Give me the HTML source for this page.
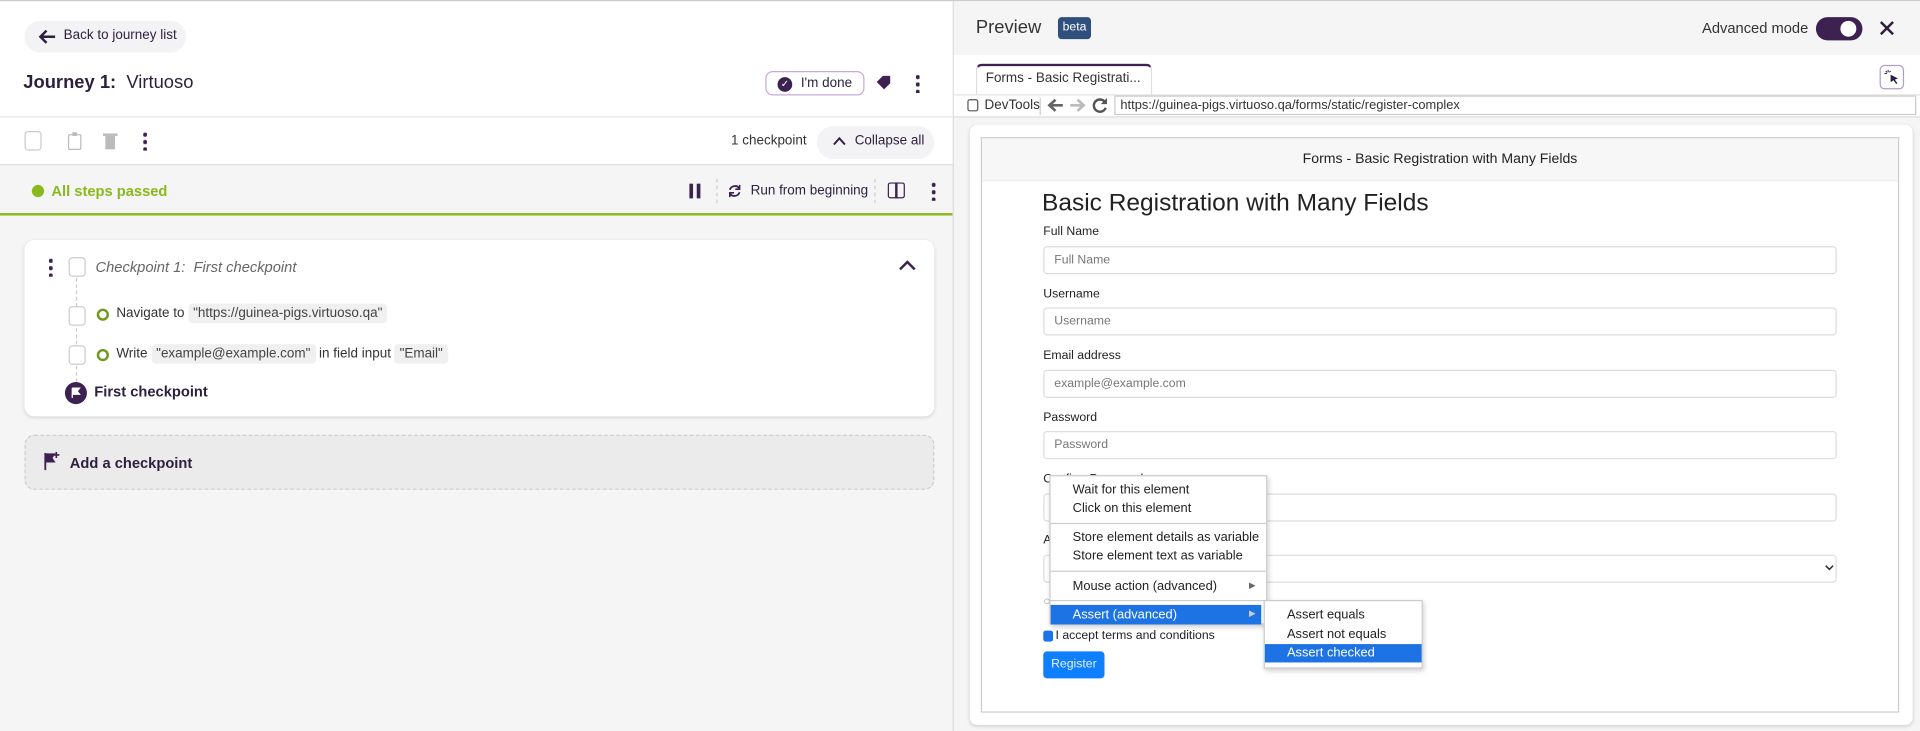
<!DOCTYPE html>
<html><head><meta charset="utf-8"><style>
*{box-sizing:border-box;margin:0;padding:0}
body{width:1920px;height:731px;overflow:hidden;font-family:"Liberation Sans",sans-serif;background:#fff;position:relative;color:#2d1f3d}
#w{position:absolute;left:0;top:0;width:1568px;height:597px;transform:scale(1.22449);transform-origin:0 0}
.a{position:absolute}
.t{font-size:12px;white-space:nowrap}
.cb{position:absolute;width:14px;height:16px;border:1px solid #ccc;border-radius:3px;background:#fff}
.chip{background:#f0f0f0;border-radius:3px;padding:2px 4px;color:#444}
.lbl{position:absolute;left:852px;font-size:10px;color:#222}
.inp{position:absolute;left:852px;width:648px;height:23px;border:1px solid #ddd;border-radius:3px;background:#fff;font-size:10px;color:#777;padding:5px 8px}
.mi{position:absolute;font-size:10.5px;color:#222;white-space:nowrap}
.sep{position:absolute;height:1px;background:#ccc}
.dots{position:absolute;width:3px;height:16px;background:radial-gradient(circle,#3d2150 1.5px,transparent 2px) 0 0/3px 6px}
</style></head><body><div id="w">
<div class="a" style="left:0;top:0;width:1568px;height:1px;background:#ccc"></div>
<!-- left panel -->
<div class="a" style="left:0;top:135px;width:778px;height:462px;background:#f5f5f5"></div>
<div class="a" style="left:20px;top:17px;width:132px;height:26px;background:#f3f3f5;border-radius:13px"></div>
<svg class="a" style="left:30px;top:23px" width="16" height="14" viewBox="0 0 16 14"><path d="M15 7H3M8 2L3 7l5 5" stroke="#2d1f3d" stroke-width="2" fill="none"/></svg>
<div class="a t" style="left:52px;top:23px;font-size:11px;color:#2d1f3d">Back to journey list</div>
<div class="a" style="left:19px;top:59px;font-size:15px;color:#2d1f3d"><b style="font-weight:600">Journey 1:</b>&nbsp; Virtuoso</div>
<div class="a" style="left:625px;top:58px;width:81px;height:20px;border:1px solid #c9a8e0;border-radius:6px"></div>
<div class="a" style="left:635px;top:63px;width:12px;height:12px;border-radius:50%;background:#3d2150;color:#fff;font-size:8px;text-align:center;line-height:12px">✓</div>
<div class="a t" style="left:654px;top:62px;font-size:11px">I'm done</div>
<svg class="a" style="left:715px;top:61px" width="13" height="13" viewBox="0 0 13 13"><path d="M1 6L6 1h6v6l-5 5z" fill="#3d2150"/></svg>
<div class="dots" style="left:748px;top:60px"></div>
<div class="a" style="left:0;top:95px;width:778px;height:1px;background:#e6e6e6"></div>
<div class="cb" style="left:20px;top:107px"></div>
<svg class="a" style="left:55px;top:107px" width="12" height="16" viewBox="0 0 12 16"><rect x="1" y="3" width="10" height="12" rx="1" fill="none" stroke="#bbb"/><rect x="4" y="1" width="4" height="3" fill="#bbb"/></svg>
<svg class="a" style="left:84px;top:108px" width="12" height="14" viewBox="0 0 12 14"><rect x="2" y="3" width="8" height="11" fill="#bbb"/><rect x="0" y="1" width="12" height="2" fill="#bbb"/></svg>
<div class="dots" style="left:117px;top:107px"></div>
<div class="a t" style="left:597px;top:109px;font-size:11px;color:#333">1 checkpoint</div>
<div class="a" style="left:667px;top:103px;width:96px;height:27px;background:#f3f3f5;border-radius:14px"></div>
<svg class="a" style="left:680px;top:111px" width="11" height="8" viewBox="0 0 11 8"><path d="M1 7l4.5-5 4.5 5" stroke="#2d1f3d" stroke-width="1.6" fill="none"/></svg>
<div class="a t" style="left:698px;top:109px;font-size:11px">Collapse all</div>
<div class="a" style="left:0;top:134px;width:778px;height:1px;background:#ddd"></div>
<div class="a" style="left:26px;top:151px;width:10px;height:10px;border-radius:50%;background:#8ab91e"></div>
<div class="a t" style="left:42px;top:149px;font-size:12px;color:#8ab91e;font-weight:600">All steps passed</div>
<div class="a" style="left:563px;top:150px;width:3px;height:12px;background:#3d2150"></div>
<div class="a" style="left:569px;top:150px;width:3px;height:12px;background:#3d2150"></div>
<div class="a" style="left:585px;top:146px;width:0;height:20px;border-left:1px dashed #ccc"></div>
<svg class="a" style="left:594px;top:150px" width="12" height="12" viewBox="0 0 12 12"><path d="M10 4A4.5 4.5 0 0 0 2 5M2 8a4.5 4.5 0 0 0 8-1" stroke="#3d2150" stroke-width="1.5" fill="none"/><path d="M10 1v3.5H6.5M2 11V7.5h3.5" stroke="#3d2150" stroke-width="1.3" fill="none"/></svg>
<div class="a t" style="left:613px;top:150px;font-size:11px">Run from beginning</div>
<div class="a" style="left:714px;top:146px;width:0;height:20px;border-left:1px dashed #ccc"></div>
<div class="a" style="left:725px;top:149px;width:14px;height:13px;border:1.5px solid #3d2150;border-radius:2px"></div>
<div class="a" style="left:731px;top:149px;width:1.5px;height:13px;background:#3d2150"></div>
<div class="dots" style="left:761px;top:148px"></div>
<div class="a" style="left:0;top:174px;width:778px;height:2px;background:#8ab91e"></div>
<!-- card -->
<div class="a" style="left:20px;top:196px;width:743px;height:144px;background:#fff;border-radius:8px;box-shadow:0 1px 3px rgba(0,0,0,.12)"></div>
<div class="dots" style="left:40px;top:210px"></div>
<div class="cb" style="left:56px;top:210px"></div>
<div class="a t" style="left:78px;top:211px;font-size:12px;color:#666;font-style:italic">Checkpoint 1:&nbsp; First checkpoint</div>
<svg class="a" style="left:734px;top:212px" width="14" height="10" viewBox="0 0 14 10"><path d="M1 8l6-6 6 6" stroke="#3d2150" stroke-width="2" fill="none"/></svg>
<div class="a" style="left:62px;top:227px;height:85px;border-left:1px dashed #ccc"></div>
<div class="cb" style="left:56px;top:250px"></div>
<div class="a" style="left:79px;top:252px;width:10px;height:10px;border:2.5px solid #6e9a1a;border-radius:50%"></div>
<div class="a t" style="left:95px;top:250px;font-size:11px;color:#333">Navigate to <span class="chip">"https://guinea-pigs.virtuoso.qa"</span></div>
<div class="cb" style="left:56px;top:282px"></div>
<div class="a" style="left:79px;top:285px;width:10px;height:10px;border:2.5px solid #6e9a1a;border-radius:50%"></div>
<div class="a t" style="left:95px;top:283px;font-size:11px;color:#333">Write <span class="chip">"example@example.com"</span> in field input <span class="chip">"Email"</span></div>
<div class="a" style="left:53px;top:312px;width:18px;height:18px;border-radius:50%;background:#3d2150"></div>
<svg class="a" style="left:57px;top:316px" width="10" height="10" viewBox="0 0 10 10"><path d="M2 1v8M2 1h6L6 3.5 8 6H2" fill="#fff" stroke="#fff"/></svg>
<div class="a t" style="left:77px;top:313px;font-size:12px;font-weight:600">First checkpoint</div>
<div class="a" style="left:20px;top:355px;width:743px;height:45px;background:#ebebeb;border:1.5px dashed #ccc;border-radius:8px"></div>
<svg class="a" style="left:35px;top:369px" width="14" height="15" viewBox="0 0 14 15"><path d="M2 1v14M2 2h7l-2 3 2 3H2" fill="#3d2150" stroke="#3d2150" stroke-width="1.5"/><path d="M11 0v5M8.5 2.5h5" stroke="#3d2150" stroke-width="1.3"/></svg>
<div class="a t" style="left:57px;top:371px;font-size:12px;font-weight:600">Add a checkpoint</div>
<!-- right panel -->
<div class="a" style="left:778px;top:1px;width:790px;height:596px;background:#f5f5f5;border-left:1px solid #ddd"></div>
<div class="a t" style="left:797px;top:14px;font-size:15px;color:#333">Preview</div>
<div class="a t" style="left:864px;top:14px;width:27px;height:18px;background:#2f4f7d;color:#fff;font-size:10px;border-radius:3px;text-align:center;line-height:18px">beta</div>
<div class="a t" style="left:1390px;top:16px;font-size:12px;color:#333">Advanced mode</div>
<div class="a" style="left:1483px;top:14px;width:38px;height:19px;border-radius:10px;background:#3d2150"></div>
<div class="a" style="left:1503px;top:17px;width:13px;height:13px;border-radius:50%;background:#fff"></div>
<svg class="a" style="left:1535px;top:17px" width="12" height="12" viewBox="0 0 12 12"><path d="M1 1l10 10M11 1L1 11" stroke="#2d1f3d" stroke-width="2"/></svg>
<div class="a" style="left:779px;top:45px;width:789px;height:51px;background:#fff"></div>
<div class="a" style="left:797px;top:52px;width:144px;height:26px;border:1px solid #ddd;border-top:2px solid #3d2150;border-bottom:none;border-radius:5px 5px 0 0;background:#fff"></div>
<div class="a t" style="left:805px;top:58px;font-size:11px;color:#333">Forms - Basic Registrati...</div>
<div class="a" style="left:1535px;top:53px;width:20px;height:20px;border:1px solid #b49bd0;border-radius:4px"></div>
<svg class="a" style="left:1539px;top:57px" width="12" height="12" viewBox="0 0 12 12"><path d="M5 4l6 3-2.5 1 2 3-1 .6-2-3L5 10z" fill="#2d1f3d"/><path d="M3 0v2M0 3h2M1 1l1.2 1.2M5 1L4 2" stroke="#2d1f3d" stroke-width=".8"/></svg>
<div class="a" style="left:779px;top:77px;width:789px;height:1px;background:#e3e3e3"></div>
<div class="a" style="left:790px;top:81px;width:9px;height:10px;border:1px solid #555;border-radius:2px"></div>
<div class="a t" style="left:804px;top:80px;font-size:11px;color:#333">DevTools</div>
<div class="a" style="left:849px;top:80px;width:1px;height:14px;background:#ccc"></div>
<svg class="a" style="left:855px;top:80px" width="14" height="12" viewBox="0 0 14 12"><path d="M13 6H3M7 1.5L2 6l5 4.5" stroke="#666" stroke-width="2.2" fill="none"/></svg>
<svg class="a" style="left:873px;top:80px" width="14" height="12" viewBox="0 0 14 12"><path d="M1 6h10M7 1.5L12 6l-5 4.5" stroke="#bbb" stroke-width="2.2" fill="none"/></svg>
<svg class="a" style="left:892px;top:79px" width="13" height="14" viewBox="0 0 13 14"><path d="M10.5 4.5A5 5 0 1 0 11 9" stroke="#555" stroke-width="2" fill="none"/><path d="M12 1v5H7z" fill="#555"/></svg>
<div class="a" style="left:910px;top:78px;width:655px;height:16px;border:1px solid #ccc;background:#fff"></div>
<div class="a t" style="left:915px;top:80px;font-size:10.5px;color:#333">https://guinea-pigs.virtuoso.qa/forms/static/register-complex</div>
<div class="a" style="left:779px;top:95px;width:789px;height:1px;background:#ddd"></div>
<div class="a" style="left:792px;top:102px;width:770px;height:490px;background:#fff;border-radius:6px;box-shadow:0 1px 3px rgba(0,0,0,.15)"></div>
<div class="a" style="left:801px;top:112px;width:750px;height:470px;border:1px solid #ccc;background:#fff"></div>
<div class="a" style="left:802px;top:113px;width:748px;height:35px;background:#f7f7f7;border-bottom:1px solid #eee"></div>
<div class="a t" style="left:802px;top:124px;width:748px;text-align:center;font-size:11.5px;color:#222">Forms - Basic Registration with Many Fields</div>
<div class="a t" style="left:851px;top:155px;font-size:20px;color:#222">Basic Registration with Many Fields</div>
<div class="lbl" style="top:184px">Full Name</div><div class="inp" style="top:201px">Full Name</div>
<div class="lbl" style="top:235px">Username</div><div class="inp" style="top:251px">Username</div>
<div class="lbl" style="top:285px">Email address</div><div class="inp" style="top:302px">example@example.com</div>
<div class="lbl" style="top:336px">Password</div><div class="inp" style="top:352px">Password</div>
<div class="lbl" style="top:386px">Confirm Password</div><div class="inp" style="top:403px"></div>
<div class="lbl" style="top:436px">Age</div><div class="inp" style="top:453px"></div>
<svg class="a" style="left:1490px;top:461px" width="8" height="6" viewBox="0 0 8 6"><path d="M1 1l3 3 3-3" stroke="#333" stroke-width="1.3" fill="none"/></svg>
<div class="lbl" style="top:486px;color:#999">○</div>
<div class="a" style="left:852px;top:515px;width:8px;height:9px;background:#1a73e8;border-radius:2px"></div>
<div class="lbl" style="left:862px;top:514px">I accept terms and conditions</div>
<div class="a" style="left:852px;top:532px;width:50px;height:22px;background:#0d7fff;border-radius:3px;color:#e8f0ff;font-size:10px;text-align:center;line-height:22px">Register</div>
<!-- context menu -->
<div class="a" style="left:857px;top:388px;width:178px;height:122px;background:#fff;border:1px solid #ccc;box-shadow:1px 2px 4px rgba(0,0,0,.2)"></div>
<div class="mi" style="left:876px;top:394px">Wait for this element</div>
<div class="mi" style="left:876px;top:409px">Click on this element</div>
<div class="sep" style="left:858px;top:427px;width:176px"></div>
<div class="mi" style="left:876px;top:433px">Store element details as variable</div>
<div class="mi" style="left:876px;top:448px">Store element text as variable</div>
<div class="sep" style="left:858px;top:466px;width:176px"></div>
<div class="mi" style="left:876px;top:473px">Mouse action (advanced)</div>
<div class="mi" style="left:1020px;top:474px;font-size:7px;color:#666">▶</div>
<div class="sep" style="left:858px;top:490px;width:176px"></div>
<div class="a" style="left:858px;top:494px;width:172px;height:16px;background:#1d72e4"></div>
<div class="mi" style="left:876px;top:496px;color:#fff">Assert (advanced)</div>
<div class="mi" style="left:1020px;top:497px;font-size:7px;color:#ccc">▶</div>
<div class="a" style="left:1032px;top:490px;width:130px;height:56px;background:#fff;border:1px solid #ccc;box-shadow:1px 2px 4px rgba(0,0,0,.2)"></div>
<div class="mi" style="left:1051px;top:496px">Assert equals</div>
<div class="mi" style="left:1051px;top:512px">Assert not equals</div>
<div class="a" style="left:1033px;top:526px;width:128px;height:15px;background:#1d72e4"></div>
<div class="mi" style="left:1051px;top:527px;color:#fff">Assert checked</div>
</div></body></html>
